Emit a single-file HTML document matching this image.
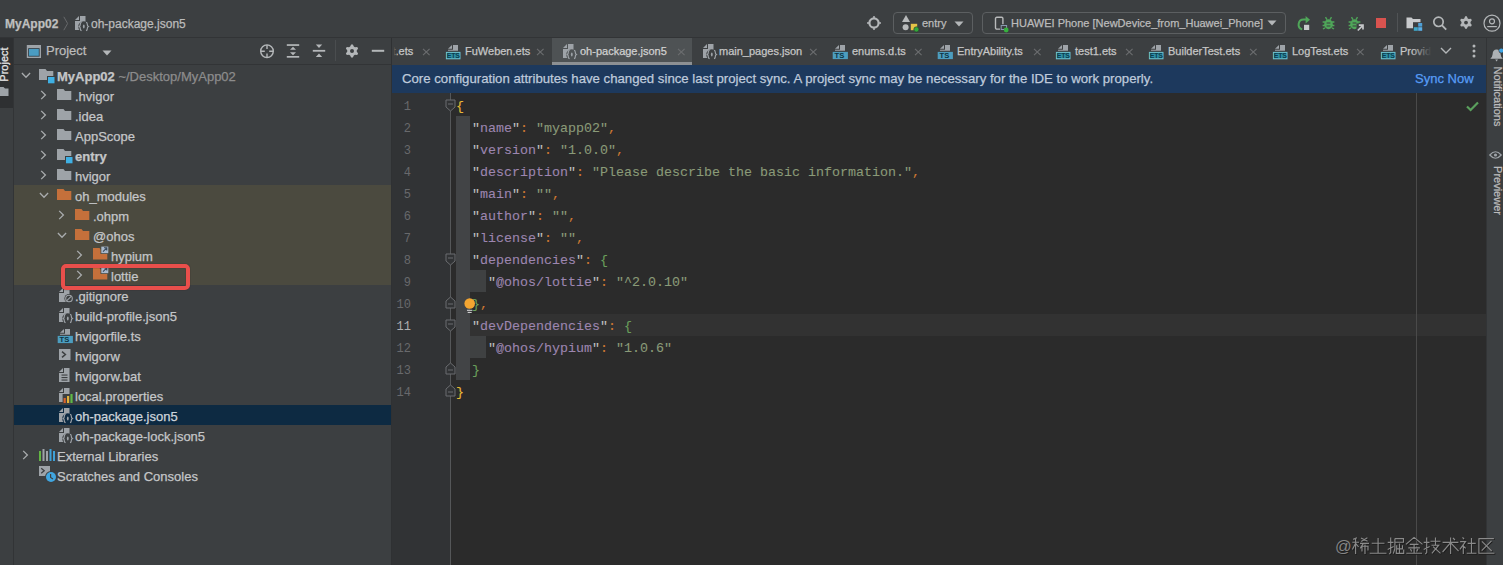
<!DOCTYPE html>
<html><head><meta charset="utf-8">
<style>
*{margin:0;padding:0;box-sizing:border-box}
html,body{width:1503px;height:565px;overflow:hidden;background:#3c3f41;font-family:"Liberation Sans",sans-serif;color:#bbbbbb;position:relative}
.a{position:absolute}
.t{white-space:pre;-webkit-text-stroke:0.25px currentColor}
svg{overflow:visible}
</style></head><body>
<div class="a" style="left:0;top:0;width:1503px;height:37px;background:#3c3f41"></div><div class="a" style="left:0;top:37px;width:13px;height:528px;background:#3c3f41"></div><div class="a" style="left:0;top:37px;width:13px;height:71px;background:#2e3032"></div><div class="a" style="left:13px;top:37px;width:1px;height:528px;background:#323436"></div><div class="a" style="left:14px;top:37px;width:377px;height:528px;background:#3c3f41"></div><div class="a" style="left:14px;top:64px;width:377px;height:1px;background:#323436"></div><div class="a" style="left:391px;top:37px;width:1px;height:528px;background:#2f3133"></div><div class="a" style="left:392px;top:37px;width:1094px;height:28px;background:#3c3f41"></div><div class="a" style="left:392px;top:65px;width:1094px;height:28px;background:#1d395d"></div><div class="a" style="left:392px;top:93px;width:58px;height:472px;background:#313335"></div><div class="a" style="left:450px;top:93px;width:1036px;height:472px;background:#2b2b2b"></div><div class="a" style="left:1486px;top:37px;width:17px;height:528px;background:#3c3f41"></div><div class="a" style="left:1486px;top:37px;width:1px;height:528px;background:#323436"></div><div class="a" style="left:0;top:37px;width:1503px;height:1px;background:#323436"></div><div class="a" style="left:14px;top:185px;width:377px;height:100px;background:#4b4a3f"></div><div class="a" style="left:14px;top:405px;width:377px;height:20px;background:#0d2a42"></div><svg class="a" style="left:21px;top:72px;" width="10" height="7" viewBox="0 0 10 7"><path d="M0.9 1 L5 5.2 L9.1 1" fill="none" stroke="#a9acae" stroke-width="1.3"/></svg><svg class="a" style="left:39px;top:69px;" width="17" height="15" viewBox="0 0 17 15"><path d="M0 0 H6.5 L8 2 H14.3 V11 H0 Z" fill="#9ea3a8"/><rect x="8" y="7" width="8.5" height="8" fill="#3c3f41"/><rect x="9" y="8" width="6.5" height="6.3" fill="#3fb0e4"/></svg><div class="a t" style="left:57px;top:67px;font-size:13px;line-height:20px;color:#c4c6c8;font-weight:normal;font-family:"Liberation Sans",sans-serif;"><b>MyApp02</b><span style="color:#8c8c8c"> ~/Desktop/MyApp02</span></div><svg class="a" style="left:39.5px;top:90px;" width="7" height="10" viewBox="0 0 7 10"><path d="M1.2 0.9 L5.4 5 L1.2 9.1" fill="none" stroke="#a9acae" stroke-width="1.3"/></svg><svg class="a" style="left:57px;top:89px;" width="15" height="12" viewBox="0 0 15 12"><path d="M0 0 H6.5 L8 2 H14.3 V11 H0 Z" fill="#9ea3a8"/></svg><div class="a t" style="left:75px;top:87px;font-size:13px;line-height:20px;color:#c4c6c8;font-weight:normal;font-family:"Liberation Sans",sans-serif;">.hvigor</div><svg class="a" style="left:39.5px;top:110px;" width="7" height="10" viewBox="0 0 7 10"><path d="M1.2 0.9 L5.4 5 L1.2 9.1" fill="none" stroke="#a9acae" stroke-width="1.3"/></svg><svg class="a" style="left:57px;top:109px;" width="15" height="12" viewBox="0 0 15 12"><path d="M0 0 H6.5 L8 2 H14.3 V11 H0 Z" fill="#9ea3a8"/></svg><div class="a t" style="left:75px;top:107px;font-size:13px;line-height:20px;color:#c4c6c8;font-weight:normal;font-family:"Liberation Sans",sans-serif;">.idea</div><svg class="a" style="left:39.5px;top:130px;" width="7" height="10" viewBox="0 0 7 10"><path d="M1.2 0.9 L5.4 5 L1.2 9.1" fill="none" stroke="#a9acae" stroke-width="1.3"/></svg><svg class="a" style="left:57px;top:129px;" width="15" height="12" viewBox="0 0 15 12"><path d="M0 0 H6.5 L8 2 H14.3 V11 H0 Z" fill="#9ea3a8"/></svg><div class="a t" style="left:75px;top:127px;font-size:13px;line-height:20px;color:#c4c6c8;font-weight:normal;font-family:"Liberation Sans",sans-serif;">AppScope</div><svg class="a" style="left:39.5px;top:150px;" width="7" height="10" viewBox="0 0 7 10"><path d="M1.2 0.9 L5.4 5 L1.2 9.1" fill="none" stroke="#a9acae" stroke-width="1.3"/></svg><svg class="a" style="left:57px;top:149px;" width="17" height="15" viewBox="0 0 17 15"><path d="M0 0 H6.5 L8 2 H14.3 V11 H0 Z" fill="#9ea3a8"/><rect x="8" y="7" width="8.5" height="8" fill="#3c3f41"/><rect x="9" y="8" width="6.5" height="6.3" fill="#3fb0e4"/></svg><div class="a t" style="left:75px;top:147px;font-size:13px;line-height:20px;color:#c4c6c8;font-weight:normal;font-family:"Liberation Sans",sans-serif;"><b>entry</b></div><svg class="a" style="left:39.5px;top:170px;" width="7" height="10" viewBox="0 0 7 10"><path d="M1.2 0.9 L5.4 5 L1.2 9.1" fill="none" stroke="#a9acae" stroke-width="1.3"/></svg><svg class="a" style="left:57px;top:169px;" width="15" height="12" viewBox="0 0 15 12"><path d="M0 0 H6.5 L8 2 H14.3 V11 H0 Z" fill="#9ea3a8"/></svg><div class="a t" style="left:75px;top:167px;font-size:13px;line-height:20px;color:#c4c6c8;font-weight:normal;font-family:"Liberation Sans",sans-serif;">hvigor</div><svg class="a" style="left:39px;top:192px;" width="10" height="7" viewBox="0 0 10 7"><path d="M0.9 1 L5 5.2 L9.1 1" fill="none" stroke="#a9acae" stroke-width="1.3"/></svg><svg class="a" style="left:57px;top:189px;" width="15" height="12" viewBox="0 0 15 12"><path d="M0 0 H6.5 L8 2 H14.3 V11 H0 Z" fill="#c4703b"/></svg><div class="a t" style="left:75px;top:187px;font-size:13px;line-height:20px;color:#c4c6c8;font-weight:normal;font-family:"Liberation Sans",sans-serif;">oh_modules</div><svg class="a" style="left:57.5px;top:210px;" width="7" height="10" viewBox="0 0 7 10"><path d="M1.2 0.9 L5.4 5 L1.2 9.1" fill="none" stroke="#a9acae" stroke-width="1.3"/></svg><svg class="a" style="left:75px;top:209px;" width="15" height="12" viewBox="0 0 15 12"><path d="M0 0 H6.5 L8 2 H14.3 V11 H0 Z" fill="#c4703b"/></svg><div class="a t" style="left:93px;top:207px;font-size:13px;line-height:20px;color:#c4c6c8;font-weight:normal;font-family:"Liberation Sans",sans-serif;">.ohpm</div><svg class="a" style="left:57px;top:232px;" width="10" height="7" viewBox="0 0 10 7"><path d="M0.9 1 L5 5.2 L9.1 1" fill="none" stroke="#a9acae" stroke-width="1.3"/></svg><svg class="a" style="left:75px;top:229px;" width="15" height="12" viewBox="0 0 15 12"><path d="M0 0 H6.5 L8 2 H14.3 V11 H0 Z" fill="#c4703b"/></svg><div class="a t" style="left:93px;top:227px;font-size:13px;line-height:20px;color:#c4c6c8;font-weight:normal;font-family:"Liberation Sans",sans-serif;">@ohos</div><svg class="a" style="left:75.5px;top:250px;" width="7" height="10" viewBox="0 0 7 10"><path d="M1.2 0.9 L5.4 5 L1.2 9.1" fill="none" stroke="#a9acae" stroke-width="1.3"/></svg><svg class="a" style="left:93px;top:246px;" width="17" height="15" viewBox="0 0 17 15"><path d="M0 2 H6.5 L8 3.8 H14.3 V13.5 H0 Z" fill="#c4703b"/><rect x="7.5" y="0" width="8.5" height="8" fill="#4b4a3f"/><rect x="8.3" y="0.6" width="7" height="6.6" fill="#a9b9cc"/><path d="M10 5.6 L13.8 1.8 M11 1.8 H13.8 V4.6" stroke="#3a4a5a" stroke-width="1.1" fill="none"/></svg><div class="a t" style="left:111px;top:247px;font-size:13px;line-height:20px;color:#c4c6c8;font-weight:normal;font-family:"Liberation Sans",sans-serif;">hypium</div><svg class="a" style="left:75.5px;top:270px;" width="7" height="10" viewBox="0 0 7 10"><path d="M1.2 0.9 L5.4 5 L1.2 9.1" fill="none" stroke="#a9acae" stroke-width="1.3"/></svg><svg class="a" style="left:93px;top:266px;" width="17" height="15" viewBox="0 0 17 15"><path d="M0 2 H6.5 L8 3.8 H14.3 V13.5 H0 Z" fill="#c4703b"/><rect x="7.5" y="0" width="8.5" height="8" fill="#4b4a3f"/><rect x="8.3" y="0.6" width="7" height="6.6" fill="#a9b9cc"/><path d="M10 5.6 L13.8 1.8 M11 1.8 H13.8 V4.6" stroke="#3a4a5a" stroke-width="1.1" fill="none"/></svg><div class="a t" style="left:111px;top:267px;font-size:13px;line-height:20px;color:#c4c6c8;font-weight:normal;font-family:"Liberation Sans",sans-serif;">lottie</div><svg class="a" style="left:59px;top:287px;" width="16" height="17" viewBox="0 0 16 17"><path d="M0 5 L4 1 V5 Z" fill="#9ea3a8"/><path d="M5 1 H10.5 V15 H0 V6 H5 Z" fill="#9ea3a8"/><circle cx="10" cy="11.5" r="4.6" fill="#3c3f41"/><circle cx="10" cy="11.5" r="3.3" fill="none" stroke="#9ea3a8" stroke-width="1.1"/><path d="M7.8 13.7 L12.2 9.3" stroke="#9ea3a8" stroke-width="1.1"/></svg><div class="a t" style="left:75px;top:287px;font-size:13px;line-height:20px;color:#c4c6c8;font-weight:normal;font-family:"Liberation Sans",sans-serif;">.gitignore</div><svg class="a" style="left:59px;top:307px;" width="16" height="17" viewBox="0 0 16 17"><path d="M0 5 L4 1 V5 Z" fill="#9ea3a8"/><path d="M5 1 H10.5 V15 H0 V6 H5 Z" fill="#9ea3a8"/><ellipse cx="8.8" cy="11.6" rx="5.6" ry="5.4" fill="#3c3f41"/><path d="M6.6 7.4 Q5.2 7.6 5.3 9.2 Q5.4 10.9 4.2 11.5 Q5.4 12.1 5.3 13.8 Q5.2 15.4 6.6 15.6" fill="none" stroke="#9ea3a8" stroke-width="1.15"/><path d="M11 7.4 Q12.4 7.6 12.3 9.2 Q12.2 10.9 13.4 11.5 Q12.2 12.1 12.3 13.8 Q12.4 15.4 11 15.6" fill="none" stroke="#9ea3a8" stroke-width="1.15"/><ellipse cx="8.8" cy="11.5" rx="0.9" ry="1.9" fill="#9ea3a8"/></svg><div class="a t" style="left:75px;top:307px;font-size:13px;line-height:20px;color:#c4c6c8;font-weight:normal;font-family:"Liberation Sans",sans-serif;">build-profile.json5</div><svg class="a" style="left:57px;top:327px;" width="16" height="17" viewBox="0 0 16 17"><path d="M3 5.8 L7 1.9 V5.8 Z" fill="#9ea3a8"/><path d="M8 1.9 H13 V7.8 H3 V6.8 H8 Z" fill="#9ea3a8"/><rect x="0.7" y="8.9" width="15.2" height="7.2" fill="#4c9dbf"/><text x="2.6" y="15.3" font-family="Liberation Sans" font-size="7.6" fill="#0e3445" font-weight="bold">TS</text></svg><div class="a t" style="left:75px;top:327px;font-size:13px;line-height:20px;color:#c4c6c8;font-weight:normal;font-family:"Liberation Sans",sans-serif;">hvigorfile.ts</div><svg class="a" style="left:59px;top:347px;" width="16" height="17" viewBox="0 0 16 17"><rect x="0" y="2" width="11.5" height="11" fill="#9ea3a8"/><path d="M3 4.6 L6.4 7.5 L3 10.4" fill="none" stroke="#3c3f41" stroke-width="1.5"/></svg><div class="a t" style="left:75px;top:347px;font-size:13px;line-height:20px;color:#c4c6c8;font-weight:normal;font-family:"Liberation Sans",sans-serif;">hvigorw</div><svg class="a" style="left:59px;top:367px;" width="16" height="17" viewBox="0 0 16 17"><path d="M0 5 L4 1 V5 Z" fill="#9ea3a8"/><path d="M5 1 H10.5 V15 H0 V6 H5 Z" fill="#9ea3a8"/><rect x="2.5" y="7.5" width="6" height="1.1" fill="#3c3f41"/><rect x="2.5" y="10" width="6" height="1.1" fill="#3c3f41"/><rect x="2.5" y="12.5" width="6" height="1.1" fill="#3c3f41"/></svg><div class="a t" style="left:75px;top:367px;font-size:13px;line-height:20px;color:#c4c6c8;font-weight:normal;font-family:"Liberation Sans",sans-serif;">hvigorw.bat</div><svg class="a" style="left:59px;top:387px;" width="16" height="17" viewBox="0 0 16 17"><path d="M0 5 L4 1 V5 Z" fill="#9ea3a8"/><path d="M5 1 H10.5 V15 H0 V6 H5 Z" fill="#9ea3a8"/><rect x="3.6" y="7" width="11" height="10" fill="#3c3f41"/><rect x="4.6" y="11" width="2.2" height="5" fill="#d8622b"/><rect x="8" y="9" width="2.2" height="7" fill="#e0b23a"/><rect x="11.4" y="7" width="2.2" height="9" fill="#5fb848"/></svg><div class="a t" style="left:75px;top:387px;font-size:13px;line-height:20px;color:#c4c6c8;font-weight:normal;font-family:"Liberation Sans",sans-serif;">local.properties</div><svg class="a" style="left:59px;top:407px;" width="16" height="17" viewBox="0 0 16 17"><path d="M0 5 L4 1 V5 Z" fill="#9ea3a8"/><path d="M5 1 H10.5 V15 H0 V6 H5 Z" fill="#9ea3a8"/><ellipse cx="8.8" cy="11.6" rx="5.6" ry="5.4" fill="#0d2a42"/><path d="M6.6 7.4 Q5.2 7.6 5.3 9.2 Q5.4 10.9 4.2 11.5 Q5.4 12.1 5.3 13.8 Q5.2 15.4 6.6 15.6" fill="none" stroke="#9ea3a8" stroke-width="1.15"/><path d="M11 7.4 Q12.4 7.6 12.3 9.2 Q12.2 10.9 13.4 11.5 Q12.2 12.1 12.3 13.8 Q12.4 15.4 11 15.6" fill="none" stroke="#9ea3a8" stroke-width="1.15"/><ellipse cx="8.8" cy="11.5" rx="0.9" ry="1.9" fill="#9ea3a8"/></svg><div class="a t" style="left:75px;top:407px;font-size:13px;line-height:20px;color:#cdd4db;font-weight:normal;font-family:"Liberation Sans",sans-serif;">oh-package.json5</div><svg class="a" style="left:59px;top:427px;" width="16" height="17" viewBox="0 0 16 17"><path d="M0 5 L4 1 V5 Z" fill="#9ea3a8"/><path d="M5 1 H10.5 V15 H0 V6 H5 Z" fill="#9ea3a8"/><ellipse cx="8.8" cy="11.6" rx="5.6" ry="5.4" fill="#3c3f41"/><path d="M6.6 7.4 Q5.2 7.6 5.3 9.2 Q5.4 10.9 4.2 11.5 Q5.4 12.1 5.3 13.8 Q5.2 15.4 6.6 15.6" fill="none" stroke="#9ea3a8" stroke-width="1.15"/><path d="M11 7.4 Q12.4 7.6 12.3 9.2 Q12.2 10.9 13.4 11.5 Q12.2 12.1 12.3 13.8 Q12.4 15.4 11 15.6" fill="none" stroke="#9ea3a8" stroke-width="1.15"/><ellipse cx="8.8" cy="11.5" rx="0.9" ry="1.9" fill="#9ea3a8"/></svg><div class="a t" style="left:75px;top:427px;font-size:13px;line-height:20px;color:#c4c6c8;font-weight:normal;font-family:"Liberation Sans",sans-serif;">oh-package-lock.json5</div><svg class="a" style="left:21.5px;top:450px;" width="7" height="10" viewBox="0 0 7 10"><path d="M1.2 0.9 L5.4 5 L1.2 9.1" fill="none" stroke="#a9acae" stroke-width="1.3"/></svg><svg class="a" style="left:39px;top:448px;" width="16" height="14" viewBox="0 0 16 14"><rect x="0" y="3" width="2" height="10" fill="#62b543"/><rect x="3.5" y="1" width="2" height="12" fill="#9ea3a8"/><rect x="7" y="3" width="2" height="10" fill="#9ea3a8"/><rect x="10.5" y="1" width="2" height="12" fill="#3fa0d6"/><rect x="14" y="3" width="2" height="10" fill="#3fa0d6"/></svg><div class="a t" style="left:57px;top:447px;font-size:13px;line-height:20px;color:#c4c6c8;font-weight:normal;font-family:"Liberation Sans",sans-serif;">External Libraries</div><svg class="a" style="left:39px;top:466px;" width="18" height="17" viewBox="0 0 18 17"><rect x="0" y="0" width="11" height="10" fill="#9ea3a8"/><path d="M2.2 2.2 L5.2 4.7 L2.2 7.2" fill="none" stroke="#3c3f41" stroke-width="1.3"/><circle cx="12" cy="11" r="6" fill="#3c3f41"/><circle cx="12" cy="11" r="5" fill="#40a6e0"/><path d="M11.6 8 V11.4 L14 13" fill="none" stroke="#3c3f41" stroke-width="1.2"/></svg><div class="a t" style="left:57px;top:467px;font-size:13px;line-height:20px;color:#c4c6c8;font-weight:normal;font-family:"Liberation Sans",sans-serif;">Scratches and Consoles</div><div class="a" style="left:61px;top:264px;width:129px;height:26px;border:4px solid #e94f4b;border-radius:5px;box-shadow:0 0 1px #2a1a1a, inset 0 0 1px #2a1a1a"></div><svg class="a" style="left:26px;top:44px;" width="16" height="15" viewBox="0 0 16 15"><rect x="0.8" y="1" width="14.2" height="13" fill="#9ea3a8"/><rect x="2.2" y="4.2" width="11.4" height="8.4" fill="#2a3a44"/><rect x="3" y="5" width="9.8" height="6.8" fill="#4a9cc2"/></svg><div class="a t" style="left:46px;top:43px;font-size:13px;line-height:16px;color:#bbbbbb;font-weight:normal;font-family:"Liberation Sans",sans-serif;">Project</div><svg class="a" style="left:102px;top:50px;" width="10" height="6" viewBox="0 0 10 6"><path d="M0.5 0.5 H9.5 L5 5.5 Z" fill="#b4b7b9"/></svg><svg class="a" style="left:259px;top:44px;" width="16" height="15" viewBox="0 0 16 15"><circle cx="8" cy="7.2" r="6.3" fill="none" stroke="#b4b7b9" stroke-width="1.4"/><path d="M8 1 V5 M8 9.4 V13.4 M1.7 7.2 H5.8 M10.2 7.2 H14.3" stroke="#b4b7b9" stroke-width="1.4"/></svg><svg class="a" style="left:286px;top:43px;" width="14" height="16" viewBox="0 0 14 16"><rect x="0.8" y="1.2" width="12.4" height="1.7" fill="#b4b7b9"/><rect x="0.8" y="13" width="12.4" height="1.7" fill="#b4b7b9"/><path d="M4 6.8 L7 3.8 L10 6.8 Z M4 9.2 L7 12.2 L10 9.2 Z" fill="#b4b7b9"/></svg><svg class="a" style="left:312px;top:43px;" width="14" height="16" viewBox="0 0 14 16"><rect x="0.8" y="6.9" width="12.4" height="1.8" fill="#b4b7b9"/><path d="M3.8 1.6 H10.2 L7 5 Z M3.8 13.9 H10.2 L7 10.6 Z" fill="#b4b7b9"/></svg><div class="a" style="left:335px;top:40px;width:1px;height:21px;background:#4a4d4f"></div><svg class="a" style="left:344px;top:43px;" width="16" height="16" viewBox="0 0 16 16"><polygon points="7.14,1.46 8.86,1.46 9.82,3.61 10.89,4.23 13.24,3.98 14.10,5.47 12.71,7.38 12.71,8.62 14.10,10.53 13.24,12.02 10.89,11.77 9.82,12.39 8.86,14.54 7.14,14.54 6.18,12.39 5.11,11.77 2.76,12.02 1.90,10.53 3.29,8.62 3.29,7.38 1.90,5.47 2.76,3.98 5.11,4.23 6.18,3.61" fill="#b4b7b9"/><circle cx="8" cy="8" r="4.092" fill="#b4b7b9"/><circle cx="8" cy="8" r="2.0" fill="#3c3f41"/></svg><svg class="a" style="left:371px;top:49px;" width="14" height="4" viewBox="0 0 14 4"><rect x="0.8" y="0.8" width="12.4" height="2" fill="#b4b7b9"/></svg><div class="a t" style="left:-21px;top:58px;width:50px;height:13px;font-size:11px;line-height:13px;color:#e6e6e6;transform:rotate(-90deg);text-align:center">Project</div><svg class="a" style="left:0px;top:87px;" width="9" height="10" viewBox="0 0 9 10"><path d="M0 0 H3.5 L5 1.5 H8.5 V9 H0 Z" fill="#9ea3a8"/></svg><div class="a t" style="left:5px;top:17px;font-size:12px;line-height:14px;color:#bfbfbf;font-weight:normal;font-family:"Liberation Sans",sans-serif;"><b>MyApp02</b></div><svg class="a" style="left:63px;top:16px;" width="6" height="15" viewBox="0 0 6 15"><path d="M0.8 0.8 L4.6 7.5 L0.8 14.2" fill="none" stroke="#67696b" stroke-width="1"/></svg><svg class="a" style="left:75px;top:15px;" width="16" height="17" viewBox="0 0 16 17"><path d="M0 5 L4 1 V5 Z" fill="#9ea3a8"/><path d="M5 1 H10.5 V15 H0 V6 H5 Z" fill="#9ea3a8"/><ellipse cx="8.8" cy="11.6" rx="5.6" ry="5.4" fill="#3c3f41"/><path d="M6.6 7.4 Q5.2 7.6 5.3 9.2 Q5.4 10.9 4.2 11.5 Q5.4 12.1 5.3 13.8 Q5.2 15.4 6.6 15.6" fill="none" stroke="#9ea3a8" stroke-width="1.15"/><path d="M11 7.4 Q12.4 7.6 12.3 9.2 Q12.2 10.9 13.4 11.5 Q12.2 12.1 12.3 13.8 Q12.4 15.4 11 15.6" fill="none" stroke="#9ea3a8" stroke-width="1.15"/><ellipse cx="8.8" cy="11.5" rx="0.9" ry="1.9" fill="#9ea3a8"/></svg><div class="a t" style="left:91px;top:17px;font-size:12px;line-height:14px;color:#bbbbbb;font-weight:normal;font-family:"Liberation Sans",sans-serif;">oh-package.json5</div><svg class="a" style="left:866px;top:15px;" width="16" height="16" viewBox="0 0 16 16"><circle cx="8" cy="8" r="4.6" fill="none" stroke="#b4b7b9" stroke-width="2.2"/><path d="M8 1 V3.4 M8 12.6 V15 M1 8 H3.4 M12.6 8 H15" stroke="#b4b7b9" stroke-width="1.5"/></svg><div class="a" style="left:893px;top:12px;width:80px;height:22px;border:1px solid #5c5f61;border-radius:4px"></div><svg class="a" style="left:901px;top:14px;" width="20" height="18" viewBox="0 0 20 18"><path d="M5 1 L9 8 H1 Z" fill="#b8babb"/><circle cx="4.6" cy="13.2" r="3" fill="#b8babb"/><rect x="9.8" y="9.8" width="6.4" height="6.4" fill="#e4c447"/><circle cx="15.4" cy="15.4" r="2.6" fill="#32a83a" stroke="#2b2d2f" stroke-width="0.6"/></svg><div class="a t" style="left:922px;top:16px;font-size:11px;line-height:14px;color:#bbbbbb;font-weight:normal;font-family:"Liberation Sans",sans-serif;">entry</div><svg class="a" style="left:954px;top:21px;" width="10" height="6" viewBox="0 0 10 6"><path d="M0.5 0.5 H9.5 L5 5.5 Z" fill="#b4b7b9"/></svg><div class="a" style="left:982px;top:12px;width:304px;height:22px;border:1px solid #5c5f61;border-radius:4px"></div><svg class="a" style="left:994px;top:16px;" width="16" height="17" viewBox="0 0 16 17"><rect x="1.5" y="1.3" width="7.4" height="11.8" rx="1.3" fill="none" stroke="#b8babb" stroke-width="1.4"/><rect x="6" y="8.2" width="8" height="7.5" fill="#3c3f41"/><rect x="7.2" y="9.5" width="5.4" height="4" fill="none" stroke="#8a9ab0" stroke-width="1"/><circle cx="12.2" cy="14" r="2.4" fill="#36b23e"/></svg><div class="a t" style="left:1011px;top:16px;font-size:11px;line-height:14px;color:#bbbbbb;font-weight:normal;font-family:"Liberation Sans",sans-serif;">HUAWEI Phone [NewDevice_from_Huawei_Phone]</div><svg class="a" style="left:1267px;top:20px;" width="10" height="6" viewBox="0 0 10 6"><path d="M0.5 0.5 H9.5 L5 5.5 Z" fill="#b4b7b9"/></svg><svg class="a" style="left:1296px;top:16px;" width="15" height="15" viewBox="0 0 15 15"><path d="M6.2 13.4 A5 5 0 0 1 7.6 3.6 H10.4" fill="none" stroke="#4fa659" stroke-width="2"/><path d="M9.6 0 L14 3.7 L9.6 7.4 Z" fill="#4fa659"/><rect x="8" y="8.8" width="5.2" height="5.2" fill="#c8cacc"/></svg><svg class="a" style="left:1322px;top:16px;" width="14" height="15" viewBox="0 0 14 15"><ellipse cx="6.5" cy="8.2" rx="4.3" ry="5" fill="#4fa659"/><path d="M3.5 1.2 L5 3.6 M9.5 1.2 L8 3.6 M0.6 6 H3 M10 6 H12.4 M0.6 9.5 H3 M10 9.5 H12.4 M1 13 L3 11.8 M12 13 L10 11.8" stroke="#4fa659" stroke-width="1.4"/><path d="M4.6 7 H8.4 M4.6 10 H8.4" stroke="#3c3f41" stroke-width="1"/></svg><svg class="a" style="left:1348px;top:16px;" width="16" height="15" viewBox="0 0 16 15"><ellipse cx="6.5" cy="8.2" rx="4.3" ry="5" fill="#4fa659"/><path d="M3.5 1.2 L5 3.6 M9.5 1.2 L8 3.6 M0.6 6 H3 M10 6 H12.4 M0.6 9.5 H3 M10 9.5 H12.4 M1 13 L3 11.8 M12 13 L10 11.8" stroke="#4fa659" stroke-width="1.4"/><path d="M4.6 7 H8.4 M4.6 10 H8.4" stroke="#3c3f41" stroke-width="1"/><rect x="8.5" y="7.5" width="8" height="8" fill="#3c3f41"/><path d="M9.8 14.5 L14.6 9.7 M10.8 9.2 H15 V13.4" fill="none" stroke="#c4c6c8" stroke-width="1.7"/></svg><div class="a" style="left:1376px;top:18px;width:10px;height:10px;background:#d9534f"></div><div class="a" style="left:1397px;top:13px;width:1px;height:19px;background:#505355"></div><svg class="a" style="left:1406px;top:17px;" width="18" height="14" viewBox="0 0 18 14"><path d="M0.5 0.5 H5.5 L7 2 H14.5 V11.2 H0.5 Z" fill="#c9cbcd"/><rect x="7" y="5.2" width="10" height="9" fill="#3c3f41"/><rect x="12.2" y="6" width="4" height="3.6" fill="#4e9fd6"/><rect x="7.8" y="10.2" width="4" height="3.6" fill="#3fa7c8"/><rect x="12.2" y="10.2" width="4" height="3.6" fill="#5aaee6"/></svg><svg class="a" style="left:1432px;top:15px;" width="16" height="16" viewBox="0 0 16 16"><circle cx="6.5" cy="6.8" r="4.7" fill="none" stroke="#b4b7b9" stroke-width="1.7"/><path d="M9.8 10.2 L14.2 14.6" stroke="#b4b7b9" stroke-width="1.9"/></svg><svg class="a" style="left:1458px;top:15px;" width="16" height="16" viewBox="0 0 16 16"><polygon points="7.18,1.35 8.82,1.35 9.74,3.41 10.76,4.00 13.00,3.76 13.82,5.19 12.50,7.01 12.50,8.19 13.82,10.01 13.00,11.44 10.76,11.20 9.74,11.79 8.82,13.85 7.18,13.85 6.26,11.79 5.24,11.20 3.00,11.44 2.18,10.01 3.50,8.19 3.50,7.01 2.18,5.19 3.00,3.76 5.24,4.00 6.26,3.41" fill="#b4b7b9"/><circle cx="8" cy="7.6" r="3.9059999999999997" fill="#b4b7b9"/><circle cx="8" cy="7.6" r="1.9" fill="#3c3f41"/></svg><svg class="a" style="left:1483px;top:14px;" width="20" height="19" viewBox="0 0 20 19"><circle cx="9" cy="9.2" r="8" fill="none" stroke="#b4b7b9" stroke-width="1.2"/><circle cx="9" cy="7.3" r="2.5" fill="none" stroke="#b4b7b9" stroke-width="1.2"/><path d="M4.2 12.6 H13.8" stroke="#b4b7b9" stroke-width="1.2"/></svg><div class="a" style="left:552px;top:38px;width:140px;height:27px;background:#4e5254"></div><div class="a" style="left:552px;top:62px;width:140px;height:3px;background:#8d9093"></div><div class="a t" style="left:392.5px;top:44px;font-size:11px;line-height:14px;color:#c6c6c6;font-weight:normal;font-family:"Liberation Sans",sans-serif;">t.ets</div><svg class="a" style="left:422px;top:48px;" width="9" height="8" viewBox="0 0 9 8"><path d="M1 0.8 L7.6 7.2 M7.6 0.8 L1 7.2" stroke="#6b6d6f" stroke-width="1.1"/></svg><svg class="a" style="left:445px;top:43px;" width="16" height="17" viewBox="0 0 16 17"><path d="M3 5.8 L7 1.9 V5.8 Z" fill="#9ea3a8"/><path d="M8 1.9 H13 V7.8 H3 V6.8 H8 Z" fill="#9ea3a8"/><rect x="1.4" y="9.4" width="13.6" height="6.4" fill="#2f8fa6" stroke="#6cc0cf" stroke-width="1"/><text x="8.2" y="15.2" font-family="Liberation Sans" font-size="7" fill="#0b3d4e" text-anchor="middle" font-weight="bold" letter-spacing="-0.2">ETS</text></svg><div class="a t" style="left:465px;top:44px;font-size:11px;line-height:14px;color:#c6c6c6;font-weight:normal;font-family:"Liberation Sans",sans-serif;">FuWeben.ets</div><svg class="a" style="left:536px;top:48px;" width="9" height="8" viewBox="0 0 9 8"><path d="M1 0.8 L7.6 7.2 M7.6 0.8 L1 7.2" stroke="#6b6d6f" stroke-width="1.1"/></svg><svg class="a" style="left:563px;top:43px;" width="16" height="17" viewBox="0 0 16 17"><path d="M0 5 L4 1 V5 Z" fill="#9ea3a8"/><path d="M5 1 H10.5 V15 H0 V6 H5 Z" fill="#9ea3a8"/><ellipse cx="8.8" cy="11.6" rx="5.6" ry="5.4" fill="#4e5254"/><path d="M6.6 7.4 Q5.2 7.6 5.3 9.2 Q5.4 10.9 4.2 11.5 Q5.4 12.1 5.3 13.8 Q5.2 15.4 6.6 15.6" fill="none" stroke="#9ea3a8" stroke-width="1.15"/><path d="M11 7.4 Q12.4 7.6 12.3 9.2 Q12.2 10.9 13.4 11.5 Q12.2 12.1 12.3 13.8 Q12.4 15.4 11 15.6" fill="none" stroke="#9ea3a8" stroke-width="1.15"/><ellipse cx="8.8" cy="11.5" rx="0.9" ry="1.9" fill="#9ea3a8"/></svg><div class="a t" style="left:580px;top:44px;font-size:11px;line-height:14px;color:#d0d0d0;font-weight:normal;font-family:"Liberation Sans",sans-serif;">oh-package.json5</div><svg class="a" style="left:677px;top:48px;" width="9" height="8" viewBox="0 0 9 8"><path d="M1 0.8 L7.6 7.2 M7.6 0.8 L1 7.2" stroke="#6b6d6f" stroke-width="1.1"/></svg><svg class="a" style="left:703px;top:43px;" width="16" height="17" viewBox="0 0 16 17"><path d="M0 5 L4 1 V5 Z" fill="#9ea3a8"/><path d="M5 1 H10.5 V15 H0 V6 H5 Z" fill="#9ea3a8"/><ellipse cx="8.8" cy="11.6" rx="5.6" ry="5.4" fill="#3c3f41"/><path d="M6.6 7.4 Q5.2 7.6 5.3 9.2 Q5.4 10.9 4.2 11.5 Q5.4 12.1 5.3 13.8 Q5.2 15.4 6.6 15.6" fill="none" stroke="#9ea3a8" stroke-width="1.15"/><path d="M11 7.4 Q12.4 7.6 12.3 9.2 Q12.2 10.9 13.4 11.5 Q12.2 12.1 12.3 13.8 Q12.4 15.4 11 15.6" fill="none" stroke="#9ea3a8" stroke-width="1.15"/><ellipse cx="8.8" cy="11.5" rx="0.9" ry="1.9" fill="#9ea3a8"/></svg><div class="a t" style="left:719px;top:44px;font-size:11px;line-height:14px;color:#c6c6c6;font-weight:normal;font-family:"Liberation Sans",sans-serif;">main_pages.json</div><svg class="a" style="left:809px;top:48px;" width="9" height="8" viewBox="0 0 9 8"><path d="M1 0.8 L7.6 7.2 M7.6 0.8 L1 7.2" stroke="#6b6d6f" stroke-width="1.1"/></svg><svg class="a" style="left:832px;top:43px;" width="16" height="17" viewBox="0 0 16 17"><path d="M3 5.8 L7 1.9 V5.8 Z" fill="#9ea3a8"/><path d="M8 1.9 H13 V7.8 H3 V6.8 H8 Z" fill="#9ea3a8"/><rect x="0.7" y="8.9" width="15.2" height="7.2" fill="#4c9dbf"/><text x="2.6" y="15.3" font-family="Liberation Sans" font-size="7.6" fill="#0e3445" font-weight="bold">TS</text></svg><div class="a t" style="left:852px;top:44px;font-size:11px;line-height:14px;color:#c6c6c6;font-weight:normal;font-family:"Liberation Sans",sans-serif;">enums.d.ts</div><svg class="a" style="left:914px;top:48px;" width="9" height="8" viewBox="0 0 9 8"><path d="M1 0.8 L7.6 7.2 M7.6 0.8 L1 7.2" stroke="#6b6d6f" stroke-width="1.1"/></svg><svg class="a" style="left:937px;top:43px;" width="16" height="17" viewBox="0 0 16 17"><path d="M3 5.8 L7 1.9 V5.8 Z" fill="#9ea3a8"/><path d="M8 1.9 H13 V7.8 H3 V6.8 H8 Z" fill="#9ea3a8"/><rect x="0.7" y="8.9" width="15.2" height="7.2" fill="#4c9dbf"/><text x="2.6" y="15.3" font-family="Liberation Sans" font-size="7.6" fill="#0e3445" font-weight="bold">TS</text></svg><div class="a t" style="left:957px;top:44px;font-size:11px;line-height:14px;color:#c6c6c6;font-weight:normal;font-family:"Liberation Sans",sans-serif;">EntryAbility.ts</div><svg class="a" style="left:1033px;top:48px;" width="9" height="8" viewBox="0 0 9 8"><path d="M1 0.8 L7.6 7.2 M7.6 0.8 L1 7.2" stroke="#6b6d6f" stroke-width="1.1"/></svg><svg class="a" style="left:1055px;top:43px;" width="16" height="17" viewBox="0 0 16 17"><path d="M3 5.8 L7 1.9 V5.8 Z" fill="#9ea3a8"/><path d="M8 1.9 H13 V7.8 H3 V6.8 H8 Z" fill="#9ea3a8"/><rect x="1.4" y="9.4" width="13.6" height="6.4" fill="#2f8fa6" stroke="#6cc0cf" stroke-width="1"/><text x="8.2" y="15.2" font-family="Liberation Sans" font-size="7" fill="#0b3d4e" text-anchor="middle" font-weight="bold" letter-spacing="-0.2">ETS</text></svg><div class="a t" style="left:1075px;top:44px;font-size:11px;line-height:14px;color:#c6c6c6;font-weight:normal;font-family:"Liberation Sans",sans-serif;">test1.ets</div><svg class="a" style="left:1125px;top:48px;" width="9" height="8" viewBox="0 0 9 8"><path d="M1 0.8 L7.6 7.2 M7.6 0.8 L1 7.2" stroke="#6b6d6f" stroke-width="1.1"/></svg><svg class="a" style="left:1148px;top:43px;" width="16" height="17" viewBox="0 0 16 17"><path d="M3 5.8 L7 1.9 V5.8 Z" fill="#9ea3a8"/><path d="M8 1.9 H13 V7.8 H3 V6.8 H8 Z" fill="#9ea3a8"/><rect x="1.4" y="9.4" width="13.6" height="6.4" fill="#2f8fa6" stroke="#6cc0cf" stroke-width="1"/><text x="8.2" y="15.2" font-family="Liberation Sans" font-size="7" fill="#0b3d4e" text-anchor="middle" font-weight="bold" letter-spacing="-0.2">ETS</text></svg><div class="a t" style="left:1168px;top:44px;font-size:11px;line-height:14px;color:#c6c6c6;font-weight:normal;font-family:"Liberation Sans",sans-serif;">BuilderTest.ets</div><svg class="a" style="left:1249px;top:48px;" width="9" height="8" viewBox="0 0 9 8"><path d="M1 0.8 L7.6 7.2 M7.6 0.8 L1 7.2" stroke="#6b6d6f" stroke-width="1.1"/></svg><svg class="a" style="left:1272px;top:43px;" width="16" height="17" viewBox="0 0 16 17"><path d="M3 5.8 L7 1.9 V5.8 Z" fill="#9ea3a8"/><path d="M8 1.9 H13 V7.8 H3 V6.8 H8 Z" fill="#9ea3a8"/><rect x="1.4" y="9.4" width="13.6" height="6.4" fill="#2f8fa6" stroke="#6cc0cf" stroke-width="1"/><text x="8.2" y="15.2" font-family="Liberation Sans" font-size="7" fill="#0b3d4e" text-anchor="middle" font-weight="bold" letter-spacing="-0.2">ETS</text></svg><div class="a t" style="left:1292px;top:44px;font-size:11px;line-height:14px;color:#c6c6c6;font-weight:normal;font-family:"Liberation Sans",sans-serif;">LogTest.ets</div><svg class="a" style="left:1356px;top:48px;" width="9" height="8" viewBox="0 0 9 8"><path d="M1 0.8 L7.6 7.2 M7.6 0.8 L1 7.2" stroke="#6b6d6f" stroke-width="1.1"/></svg><svg class="a" style="left:1380px;top:43px;" width="16" height="17" viewBox="0 0 16 17"><path d="M3 5.8 L7 1.9 V5.8 Z" fill="#9ea3a8"/><path d="M8 1.9 H13 V7.8 H3 V6.8 H8 Z" fill="#9ea3a8"/><rect x="1.4" y="9.4" width="13.6" height="6.4" fill="#2f8fa6" stroke="#6cc0cf" stroke-width="1"/><text x="8.2" y="15.2" font-family="Liberation Sans" font-size="7" fill="#0b3d4e" text-anchor="middle" font-weight="bold" letter-spacing="-0.2">ETS</text></svg><div class="a t" style="left:1400px;top:44px;font-size:11px;line-height:14px;color:#c6c6c6;font-weight:normal;font-family:"Liberation Sans",sans-serif;">Provid</div><div class="a" style="left:392px;top:38px;width:5px;height:26px;background:linear-gradient(90deg,#3c3f41 30%,rgba(60,63,65,0.3))"></div><div class="a" style="left:1412px;top:38px;width:26px;height:26px;background:linear-gradient(90deg,rgba(60,63,65,0),#3c3f41 75%)"></div><svg class="a" style="left:1440px;top:47px;" width="12" height="8" viewBox="0 0 12 8"><path d="M1 1 L6 6 L11 1" fill="none" stroke="#b4b7b9" stroke-width="1.4"/></svg><svg class="a" style="left:1471px;top:44px;" width="6" height="14" viewBox="0 0 6 14"><circle cx="3" cy="2" r="1.5" fill="#b4b7b9"/><circle cx="3" cy="7" r="1.5" fill="#b4b7b9"/><circle cx="3" cy="12" r="1.5" fill="#b4b7b9"/></svg><div class="a t" style="left:402px;top:71px;font-size:13.2px;line-height:16px;color:#bfcadb;font-weight:normal;font-family:"Liberation Sans",sans-serif;">Core configuration attributes have changed since last project sync. A project sync may be necessary for the IDE to work properly.</div><div class="a t" style="left:1415px;top:71px;font-size:13px;line-height:16px;color:#589df6;font-weight:normal;font-family:"Liberation Sans",sans-serif;">Sync Now</div><svg class="a" style="left:1490px;top:48px;" width="14" height="15" viewBox="0 0 14 15"><path d="M0.6 10.2 Q2.4 8.8 2.6 6.2 Q2.8 1.6 6.6 1.6 Q10.4 1.6 10.6 6.2 Q10.8 8.8 12.6 10.2 V10.8 H0.6 Z" fill="#aeb2b5"/><path d="M5.2 11.6 H8 L6.6 13.4 Z" fill="#aeb2b5"/><circle cx="11.2" cy="2.6" r="2.6" fill="#3c3f41"/><circle cx="11.2" cy="2.6" r="2.1" fill="#3fa3e2"/></svg><div class="a t" style="left:1466px;top:90px;width:62px;height:13px;font-size:11px;line-height:13px;color:#bbbbbb;transform:rotate(90deg);text-align:center">Notifications</div><svg class="a" style="left:1489px;top:150px;" width="13" height="10" viewBox="0 0 13 10"><path d="M0.8 5 Q6.5 -1.5 12.2 5 Q6.5 11.5 0.8 5 Z" fill="none" stroke="#9ea3a8" stroke-width="1.2"/><circle cx="6.5" cy="5" r="1.6" fill="#9ea3a8"/></svg><div class="a t" style="left:1472px;top:184px;width:50px;height:13px;font-size:11px;line-height:13px;color:#bbbbbb;transform:rotate(90deg);text-align:center">Previewer</div><div class="a" style="left:470px;top:314px;width:1016px;height:22px;background:#323232"></div><div class="a" style="left:456px;top:116px;width:14px;height:264px;background:#424446"></div><div class="a" style="left:470px;top:270px;width:16px;height:22px;background:#3f4142"></div><div class="a" style="left:470px;top:336px;width:16px;height:22px;background:#3f4142"></div><div class="a" style="left:1416px;top:93px;width:1px;height:472px;background:#4a4a4a"></div><div class="a" style="left:450px;top:93px;width:1px;height:472px;background:#555759"></div><div class="a t" style="left:380px;top:96px;width:31px;text-align:right;font-family:'Liberation Mono',monospace;font-size:12px;line-height:22px;color:#68696c;-webkit-text-stroke:0">1</div><div class="a t" style="left:380px;top:118px;width:31px;text-align:right;font-family:'Liberation Mono',monospace;font-size:12px;line-height:22px;color:#68696c;-webkit-text-stroke:0">2</div><div class="a t" style="left:380px;top:140px;width:31px;text-align:right;font-family:'Liberation Mono',monospace;font-size:12px;line-height:22px;color:#68696c;-webkit-text-stroke:0">3</div><div class="a t" style="left:380px;top:162px;width:31px;text-align:right;font-family:'Liberation Mono',monospace;font-size:12px;line-height:22px;color:#68696c;-webkit-text-stroke:0">4</div><div class="a t" style="left:380px;top:184px;width:31px;text-align:right;font-family:'Liberation Mono',monospace;font-size:12px;line-height:22px;color:#68696c;-webkit-text-stroke:0">5</div><div class="a t" style="left:380px;top:206px;width:31px;text-align:right;font-family:'Liberation Mono',monospace;font-size:12px;line-height:22px;color:#68696c;-webkit-text-stroke:0">6</div><div class="a t" style="left:380px;top:228px;width:31px;text-align:right;font-family:'Liberation Mono',monospace;font-size:12px;line-height:22px;color:#68696c;-webkit-text-stroke:0">7</div><div class="a t" style="left:380px;top:250px;width:31px;text-align:right;font-family:'Liberation Mono',monospace;font-size:12px;line-height:22px;color:#68696c;-webkit-text-stroke:0">8</div><div class="a t" style="left:380px;top:272px;width:31px;text-align:right;font-family:'Liberation Mono',monospace;font-size:12px;line-height:22px;color:#68696c;-webkit-text-stroke:0">9</div><div class="a t" style="left:380px;top:294px;width:31px;text-align:right;font-family:'Liberation Mono',monospace;font-size:12px;line-height:22px;color:#68696c;-webkit-text-stroke:0">10</div><div class="a t" style="left:380px;top:316px;width:31px;text-align:right;font-family:'Liberation Mono',monospace;font-size:12px;line-height:22px;color:#b0b0b0;-webkit-text-stroke:0">11</div><div class="a t" style="left:380px;top:338px;width:31px;text-align:right;font-family:'Liberation Mono',monospace;font-size:12px;line-height:22px;color:#68696c;-webkit-text-stroke:0">12</div><div class="a t" style="left:380px;top:360px;width:31px;text-align:right;font-family:'Liberation Mono',monospace;font-size:12px;line-height:22px;color:#68696c;-webkit-text-stroke:0">13</div><div class="a t" style="left:380px;top:382px;width:31px;text-align:right;font-family:'Liberation Mono',monospace;font-size:12px;line-height:22px;color:#68696c;-webkit-text-stroke:0">14</div><svg class="a" style="left:445px;top:99px;" width="11" height="13" viewBox="0 0 11 13"><path d="M1 1 H10 V8 L5.5 12 L1 8 Z" fill="#313335" stroke="#6b6d70" stroke-width="1"/><path d="M3 5 H8" stroke="#6b6d70" stroke-width="1"/></svg><svg class="a" style="left:445px;top:253px;" width="11" height="13" viewBox="0 0 11 13"><path d="M1 1 H10 V8 L5.5 12 L1 8 Z" fill="#313335" stroke="#6b6d70" stroke-width="1"/><path d="M3 5 H8" stroke="#6b6d70" stroke-width="1"/></svg><svg class="a" style="left:445px;top:319px;" width="11" height="13" viewBox="0 0 11 13"><path d="M1 1 H10 V8 L5.5 12 L1 8 Z" fill="#313335" stroke="#6b6d70" stroke-width="1"/><path d="M3 5 H8" stroke="#6b6d70" stroke-width="1"/></svg><svg class="a" style="left:445px;top:296px;" width="11" height="13" viewBox="0 0 11 13"><path d="M1 12 H10 V5 L5.5 1 L1 5 Z" fill="#313335" stroke="#6b6d70" stroke-width="1"/><path d="M3 8 H8" stroke="#6b6d70" stroke-width="1"/></svg><svg class="a" style="left:445px;top:362px;" width="11" height="13" viewBox="0 0 11 13"><path d="M1 12 H10 V5 L5.5 1 L1 5 Z" fill="#313335" stroke="#6b6d70" stroke-width="1"/><path d="M3 8 H8" stroke="#6b6d70" stroke-width="1"/></svg><svg class="a" style="left:445px;top:384px;" width="11" height="13" viewBox="0 0 11 13"><path d="M1 12 H10 V5 L5.5 1 L1 5 Z" fill="#313335" stroke="#6b6d70" stroke-width="1"/><path d="M3 8 H8" stroke="#6b6d70" stroke-width="1"/></svg><div class="a t" style="left:456px;top:96px;font-family:'Liberation Mono',monospace;font-size:13.33px;line-height:22px;color:#a9b7c6;-webkit-text-stroke:0.1px currentColor"><span style="color:#e8ba36">{</span></div><div class="a t" style="left:456px;top:118px;font-family:'Liberation Mono',monospace;font-size:13.33px;line-height:22px;color:#a9b7c6;-webkit-text-stroke:0.1px currentColor">  <span style="color:#bfbfbf">&quot;</span><span style="color:#9d86b0">name</span><span style="color:#bfbfbf">&quot;</span><span style="color:#cc7832">: </span><span style="color:#8a9a78">&quot;myapp02&quot;</span><span style="color:#cc7832">,</span></div><div class="a t" style="left:456px;top:140px;font-family:'Liberation Mono',monospace;font-size:13.33px;line-height:22px;color:#a9b7c6;-webkit-text-stroke:0.1px currentColor">  <span style="color:#bfbfbf">&quot;</span><span style="color:#9d86b0">version</span><span style="color:#bfbfbf">&quot;</span><span style="color:#cc7832">: </span><span style="color:#8a9a78">&quot;1.0.0&quot;</span><span style="color:#cc7832">,</span></div><div class="a t" style="left:456px;top:162px;font-family:'Liberation Mono',monospace;font-size:13.33px;line-height:22px;color:#a9b7c6;-webkit-text-stroke:0.1px currentColor">  <span style="color:#bfbfbf">&quot;</span><span style="color:#9d86b0">description</span><span style="color:#bfbfbf">&quot;</span><span style="color:#cc7832">: </span><span style="color:#8a9a78">&quot;Please describe the basic information.&quot;</span><span style="color:#cc7832">,</span></div><div class="a t" style="left:456px;top:184px;font-family:'Liberation Mono',monospace;font-size:13.33px;line-height:22px;color:#a9b7c6;-webkit-text-stroke:0.1px currentColor">  <span style="color:#bfbfbf">&quot;</span><span style="color:#9d86b0">main</span><span style="color:#bfbfbf">&quot;</span><span style="color:#cc7832">: </span><span style="color:#8a9a78">&quot;&quot;</span><span style="color:#cc7832">,</span></div><div class="a t" style="left:456px;top:206px;font-family:'Liberation Mono',monospace;font-size:13.33px;line-height:22px;color:#a9b7c6;-webkit-text-stroke:0.1px currentColor">  <span style="color:#bfbfbf">&quot;</span><span style="color:#9d86b0">author</span><span style="color:#bfbfbf">&quot;</span><span style="color:#cc7832">: </span><span style="color:#8a9a78">&quot;&quot;</span><span style="color:#cc7832">,</span></div><div class="a t" style="left:456px;top:228px;font-family:'Liberation Mono',monospace;font-size:13.33px;line-height:22px;color:#a9b7c6;-webkit-text-stroke:0.1px currentColor">  <span style="color:#bfbfbf">&quot;</span><span style="color:#9d86b0">license</span><span style="color:#bfbfbf">&quot;</span><span style="color:#cc7832">: </span><span style="color:#8a9a78">&quot;&quot;</span><span style="color:#cc7832">,</span></div><div class="a t" style="left:456px;top:250px;font-family:'Liberation Mono',monospace;font-size:13.33px;line-height:22px;color:#a9b7c6;-webkit-text-stroke:0.1px currentColor">  <span style="color:#bfbfbf">&quot;</span><span style="color:#9d86b0">dependencies</span><span style="color:#bfbfbf">&quot;</span><span style="color:#cc7832">: </span><span style="color:#6a9f5b">{</span></div><div class="a t" style="left:456px;top:272px;font-family:'Liberation Mono',monospace;font-size:13.33px;line-height:22px;color:#a9b7c6;-webkit-text-stroke:0.1px currentColor">    <span style="color:#bfbfbf">&quot;</span><span style="color:#9d86b0">@ohos/lottie</span><span style="color:#bfbfbf">&quot;</span><span style="color:#cc7832">: </span><span style="color:#8a9a78">&quot;^2.0.10&quot;</span></div><div class="a t" style="left:456px;top:294px;font-family:'Liberation Mono',monospace;font-size:13.33px;line-height:22px;color:#a9b7c6;-webkit-text-stroke:0.1px currentColor">  <span style="color:#6a9f5b">}</span><span style="color:#cc7832">,</span></div><div class="a t" style="left:456px;top:316px;font-family:'Liberation Mono',monospace;font-size:13.33px;line-height:22px;color:#a9b7c6;-webkit-text-stroke:0.1px currentColor">  <span style="color:#bfbfbf">&quot;</span><span style="color:#9d86b0">devDependencies</span><span style="color:#bfbfbf">&quot;</span><span style="color:#cc7832">: </span><span style="color:#6a9f5b">{</span></div><div class="a t" style="left:456px;top:338px;font-family:'Liberation Mono',monospace;font-size:13.33px;line-height:22px;color:#a9b7c6;-webkit-text-stroke:0.1px currentColor">    <span style="color:#bfbfbf">&quot;</span><span style="color:#9d86b0">@ohos/hypium</span><span style="color:#bfbfbf">&quot;</span><span style="color:#cc7832">: </span><span style="color:#8a9a78">&quot;1.0.6&quot;</span></div><div class="a t" style="left:456px;top:360px;font-family:'Liberation Mono',monospace;font-size:13.33px;line-height:22px;color:#a9b7c6;-webkit-text-stroke:0.1px currentColor">  <span style="color:#6a9f5b">}</span></div><div class="a t" style="left:456px;top:382px;font-family:'Liberation Mono',monospace;font-size:13.33px;line-height:22px;color:#a9b7c6;-webkit-text-stroke:0.1px currentColor"><span style="color:#e8ba36">}</span></div><svg class="a" style="left:463px;top:297px;" width="13" height="16" viewBox="0 0 13 16"><circle cx="6.7" cy="6.5" r="5.3" fill="#f3a531"/><path d="M4 13.3 H9.4 M4.7 15.4 H8.7" stroke="#dcdcdc" stroke-width="1"/></svg><svg class="a" style="left:1466px;top:101px;" width="13" height="11" viewBox="0 0 13 11"><path d="M1 5.5 L4.6 9 L12 1.5" fill="none" stroke="#5aa05d" stroke-width="2.2"/></svg><svg class="a" style="left:1330px;top:537px;" width="175" height="20" viewBox="0 0 175 20"><g transform="translate(22.8,0.8)"><path d="M5 0.8 L1.2 2.4 M0.3 5.2 H7 M3.6 2 V17 M3.6 6.2 L0.4 12.6 M3.8 6.6 L6.6 10 M9 1 L15.6 4.2 M15.4 0.8 L9.2 4.4 M8 6.4 H17 M11.4 6.4 L8.2 11.4 M10 9.2 V14.6 M10 9.2 H16 V13.6 M13 7.6 V17" fill="none" stroke="#1c1c1c" stroke-width="1.3"/></g><g transform="translate(40.3,0.8)"><path d="M2.2 6.2 H15 M8.6 1 V16 M0.2 16.2 H17" fill="none" stroke="#1c1c1c" stroke-width="1.3"/></g><g transform="translate(58.3,0.8)"><path d="M0.2 5.4 H6 M3.2 0.4 V15.6 L1.8 17 M0.2 12.4 L6.2 9.6 M7.4 1.6 H16 V5.2 H7.4 M7.4 1.6 V11.6 L5.8 16.6 M12 6.6 V16.4 M9.2 8.2 V11.8 H15 V8.2 M8.8 12.6 V16.4 H16.2 V12.6" fill="none" stroke="#1c1c1c" stroke-width="1.3"/></g><g transform="translate(76.3,0.8)"><path d="M8.6 0.4 L0.4 7.4 M8.6 0.4 L17 7.4 M4.2 7.4 H13 M2.8 10.8 H14.4 M8.6 7.4 V16 M5 12 L6.2 14.4 M12.4 12 L11.2 14.4 M0.8 16.2 H16.6" fill="none" stroke="#1c1c1c" stroke-width="1.3"/></g><g transform="translate(94.3,0.8)"><path d="M0.2 5.4 H6 M3.2 0.4 V15.6 L1.8 17 M0.2 12.4 L6.2 9.6 M7 4.2 H17 M12 0.4 V8 M8 8.2 H15.2 L8.4 16.4 M9.6 9.6 L17 16.4" fill="none" stroke="#1c1c1c" stroke-width="1.3"/></g><g transform="translate(112.8,0.8)"><path d="M0.6 5.4 H16.4 M8.6 0.4 V17 M8.2 6.2 L0.6 15 M9 6.2 L16.6 14.2 M11 1 L13 3" fill="none" stroke="#1c1c1c" stroke-width="1.3"/></g><g transform="translate(130.3,0.8)"><path d="M3 0.4 L4.6 2 M0.6 4.6 H6 L0.4 12.4 M3.8 7.6 V17 M4.2 9.4 L6.2 11.4 M8.2 6.4 H16.2 M12 1 V16 M7.2 16.2 H17" fill="none" stroke="#1c1c1c" stroke-width="1.3"/></g><g transform="translate(148.3,0.8)"><path d="M1 1.6 H16.4 M1.4 1.6 V16.2 H17 M4.4 4.4 L14.2 14 M14 3.8 L4.2 13.6" fill="none" stroke="#1c1c1c" stroke-width="1.3"/></g><g transform="translate(22,0)"><path d="M5 0.8 L1.2 2.4 M0.3 5.2 H7 M3.6 2 V17 M3.6 6.2 L0.4 12.6 M3.8 6.6 L6.6 10 M9 1 L15.6 4.2 M15.4 0.8 L9.2 4.4 M8 6.4 H17 M11.4 6.4 L8.2 11.4 M10 9.2 V14.6 M10 9.2 H16 V13.6 M13 7.6 V17" fill="none" stroke="#8a8a8a" stroke-width="1.15"/></g><g transform="translate(39.5,0)"><path d="M2.2 6.2 H15 M8.6 1 V16 M0.2 16.2 H17" fill="none" stroke="#8a8a8a" stroke-width="1.15"/></g><g transform="translate(57.5,0)"><path d="M0.2 5.4 H6 M3.2 0.4 V15.6 L1.8 17 M0.2 12.4 L6.2 9.6 M7.4 1.6 H16 V5.2 H7.4 M7.4 1.6 V11.6 L5.8 16.6 M12 6.6 V16.4 M9.2 8.2 V11.8 H15 V8.2 M8.8 12.6 V16.4 H16.2 V12.6" fill="none" stroke="#8a8a8a" stroke-width="1.15"/></g><g transform="translate(75.5,0)"><path d="M8.6 0.4 L0.4 7.4 M8.6 0.4 L17 7.4 M4.2 7.4 H13 M2.8 10.8 H14.4 M8.6 7.4 V16 M5 12 L6.2 14.4 M12.4 12 L11.2 14.4 M0.8 16.2 H16.6" fill="none" stroke="#8a8a8a" stroke-width="1.15"/></g><g transform="translate(93.5,0)"><path d="M0.2 5.4 H6 M3.2 0.4 V15.6 L1.8 17 M0.2 12.4 L6.2 9.6 M7 4.2 H17 M12 0.4 V8 M8 8.2 H15.2 L8.4 16.4 M9.6 9.6 L17 16.4" fill="none" stroke="#8a8a8a" stroke-width="1.15"/></g><g transform="translate(112,0)"><path d="M0.6 5.4 H16.4 M8.6 0.4 V17 M8.2 6.2 L0.6 15 M9 6.2 L16.6 14.2 M11 1 L13 3" fill="none" stroke="#8a8a8a" stroke-width="1.15"/></g><g transform="translate(129.5,0)"><path d="M3 0.4 L4.6 2 M0.6 4.6 H6 L0.4 12.4 M3.8 7.6 V17 M4.2 9.4 L6.2 11.4 M8.2 6.4 H16.2 M12 1 V16 M7.2 16.2 H17" fill="none" stroke="#8a8a8a" stroke-width="1.15"/></g><g transform="translate(147.5,0)"><path d="M1 1.6 H16.4 M1.4 1.6 V16.2 H17 M4.4 4.4 L14.2 14 M14 3.8 L4.2 13.6" fill="none" stroke="#8a8a8a" stroke-width="1.15"/></g></svg><div class="a t" style="left:1335px;top:536px;font-size:16.5px;line-height:20px;color:#858585;text-shadow:0.8px 0.8px 0 #1c1c1c;-webkit-text-stroke:0">@</div>
</body></html>
